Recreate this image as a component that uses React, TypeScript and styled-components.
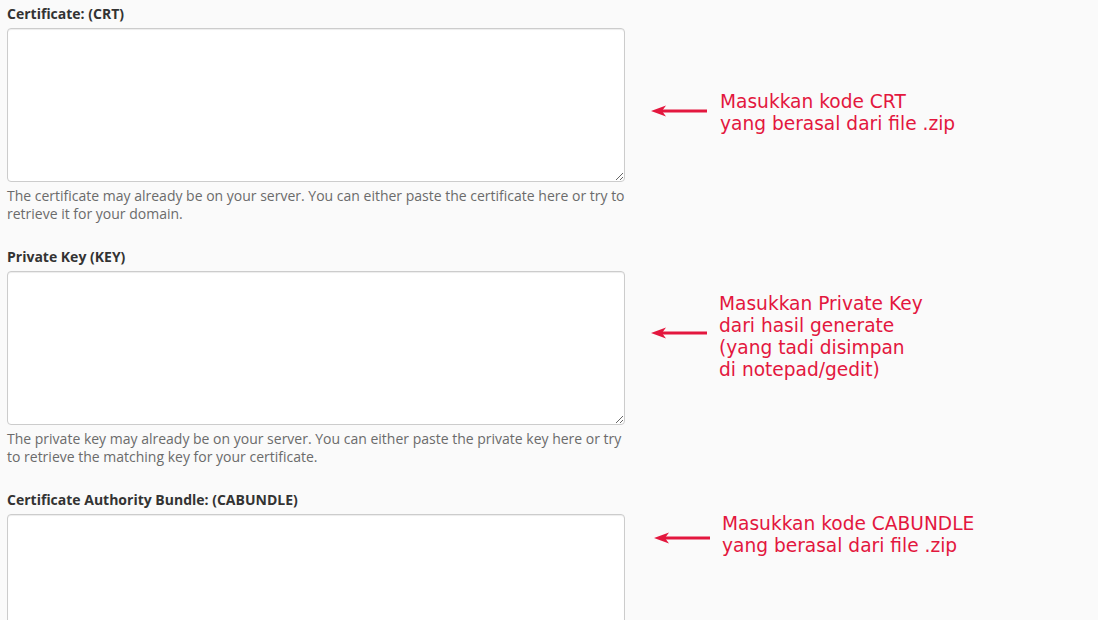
import styled, { createGlobalStyle } from 'styled-components';

const GlobalStyle = createGlobalStyle`
  html, body {
    margin: 0;
    padding: 0;
    background: #fafafa;
  }
  body {
    font-family: "Open Sans", "Liberation Sans", sans-serif;
    color: #333;
  }
`;

const Page = styled.div`
  padding: 5px 7px 0 7px;
  display: flex;
  flex-direction: column;
  gap: 25px;
`;

const Row = styled.div`
  display: flex;
  align-items: flex-start;
`;

const Field = styled.div`
  width: 618px;
  display: flex;
  flex-direction: column;
  flex-shrink: 0;
`;

const Label = styled.label`
  font-size: 14px;
  font-weight: 700;
  line-height: 18px;
  margin-bottom: 5px;
  color: #333;
`;

const Area = styled.textarea`
  box-sizing: border-box;
  width: 618px;
  height: 154px;
  border: 1px solid #cccccc;
  border-radius: 4px;
  background: #fff;
  box-shadow: inset 0 1px 1px rgba(0, 0, 0, 0.075);
  margin: 0;
  display: block;
`;

const Help = styled.p`
  margin: 5px 0 0 0;
  font-size: 14px;
  line-height: 18px;
  color: #6b6b6b;
`;

const Note = styled.div<{ $left: number; $top: number; $gap: number }>`
  display: flex;
  align-items: center;
  gap: ${p => p.$gap}px;
  margin-left: ${p => p.$left}px;
  margin-top: ${p => p.$top}px;
`;

const NoteText = styled.div`
  font-family: "DejaVu Sans", "Liberation Sans", sans-serif;
  font-size: 18.6px;
  line-height: 22px;
  color: #e3173e;
  white-space: pre;
`;

const ArrowSvg = styled.svg<{ $nudge: number }>`
  flex-shrink: 0;
  position: relative;
  top: ${p => p.$nudge}px;
`;

function Arrow({ nudge }: { nudge: number }) {
  return (
    <ArrowSvg $nudge={nudge} width="56" height="14" viewBox="0 0 56 14">
      <line x1="8" y1="7" x2="56" y2="7" stroke="#e3173e" strokeWidth="3" />
      <polygon points="0,7 15,1.5 11,7 15,12.5" fill="#e3173e" />
    </ArrowSvg>
  );
}

const sections = [
  {
    label: 'Certificate: (CRT)',
    help: 'The certificate may already be on your server. You can either paste the certificate here or try to retrieve it for your domain.',
    note: 'Masukkan kode CRT\nyang berasal dari file .zip',
    left: 26, top: 86, gap: 13, nudge: -2,
  },
  {
    label: 'Private Key (KEY)',
    help: 'The private key may already be on your server. You can either paste the private key here or try to retrieve the matching key for your certificate.',
    note: 'Masukkan Private Key\ndari hasil generate\n(yang tadi disimpan\ndi notepad/gedit)',
    left: 26, top: 45, gap: 12, nudge: -4,
  },
  {
    label: 'Certificate Authority Bundle: (CABUNDLE)',
    help: '',
    note: 'Masukkan kode CABUNDLE\nyang berasal dari file .zip',
    left: 29, top: 22, gap: 12, nudge: 3,
  },
];

export default function App() {
  return (
    <>
      <GlobalStyle />
      <Page>
        {sections.map(s => (
          <Row key={s.label}>
            <Field>
              <Label>{s.label}</Label>
              <Area />
              {s.help && <Help>{s.help}</Help>}
            </Field>
            <Note $left={s.left} $top={s.top} $gap={s.gap}>
              <Arrow nudge={s.nudge} />
              <NoteText>{s.note}</NoteText>
            </Note>
          </Row>
        ))}
      </Page>
    </>
  );
}
